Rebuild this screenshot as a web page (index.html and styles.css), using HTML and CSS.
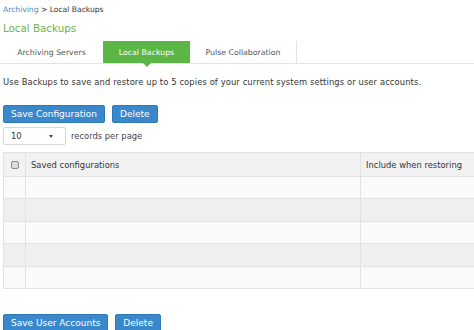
FILE: index.html
```html
<!DOCTYPE html>
<html>
<head>
<meta charset="utf-8">
<link rel="stylesheet" href="styles.css">
</head>
<body>
<div class="page">
  <div class="crumb"><a class="crumb-link">Archiving</a> &gt; Local Backups</div>
  <h1 class="title">Local Backups</h1>
  <div class="tabs">
    <div class="tab">Archiving Servers</div>
    <div class="tab active">Local Backups</div>
    <div class="tab last">Pulse Collaboration</div>
  </div>
  <p class="desc">Use Backups to save and restore up to 5 copies of your current system settings or user accounts.</p>
  <div class="btns">
    <button class="btn">Save Configuration</button>
    <button class="btn">Delete</button>
  </div>
  <div class="pager">
    <div class="select"><span>10</span><span class="caret"></span></div>
    <span class="pager-label">records per page</span>
  </div>
  <table class="grid">
    <thead>
      <tr>
        <th class="c-check"><span class="chk"></span></th>
        <th class="c-name">Saved configurations</th>
        <th class="c-inc">Include when restoring</th>
      </tr>
    </thead>
    <tbody>
      <tr><td></td><td></td><td></td></tr>
      <tr><td></td><td></td><td></td></tr>
      <tr><td></td><td></td><td></td></tr>
      <tr><td></td><td></td><td></td></tr>
      <tr><td></td><td></td><td></td></tr>
    </tbody>
  </table>
  <div class="btns bottom">
    <button class="btn">Save User Accounts</button>
    <button class="btn">Delete</button>
  </div>
</div>
</body>
</html>
```
FILE: styles.css
```css
html, body {
  margin: 0;
  padding: 0;
  background: #fff;
  overflow: hidden;
}
body {
  font-family: "DejaVu Sans", Verdana, sans-serif;
  font-size: 8.4px;
  color: #333;
}
.page {
  padding: 3px 0 0 3px;
}
.crumb {
  height: 11px;
  line-height: 11px;
  font-size: 7.6px;
  color: #333;
  margin-top: 1px;
}
.crumb-link {
  color: #4a86c5;
}
.title {
  margin: 6px 0 0 0;
  font-size: 10.3px;
  line-height: 14px;
  font-weight: normal;
  color: #6db24f;
}
.tabs {
  display: flex;
  margin: 6px 0 0 -3px;
  height: 22px;
  border-bottom: 1px solid #e3e3e3;
  font-size: 7.8px;
}
.tab {
  position: relative;
  display: flex;
  align-items: center;
  justify-content: center;
  color: #555;
  width: 103px;
}
.tab.active {
  width: 87px;
  background: #5cb646;
  color: #fff;
}
.tab.active::after {
  content: "";
  position: absolute;
  left: 50%;
  bottom: -4px;
  margin-left: -4px;
  border-left: 4px solid transparent;
  border-right: 4px solid transparent;
  border-top: 4px solid #5cb646;
}
.tab.last {
  width: 106px;
  border-right: 1px solid #e3e3e3;
}
.desc {
  margin: 13px 0 0 0;
  line-height: 10px;
  color: #333;
  letter-spacing: 0.1px;
}
.btns {
  display: flex;
  gap: 7px;
  margin-top: 18px;
}
.btn {
  font-family: "DejaVu Sans", Verdana, sans-serif;
  font-size: 9px;
  height: 18px;
  padding: 0 7px;
  background: #3a88cc;
  color: #fff;
  border: 1px solid #2f78b8;
  border-radius: 2px;
}
.pager {
  display: flex;
  align-items: center;
  gap: 5px;
  margin-top: 4px;
}
.select {
  box-sizing: border-box;
  width: 63px;
  height: 18px;
  border: 1px solid #d8d8d8;
  border-radius: 2px;
  display: flex;
  align-items: center;
  justify-content: space-between;
  padding: 0 12px 0 7px;
  color: #333;
}
.caret {
  width: 0;
  height: 0;
  border-left: 2.5px solid transparent;
  border-right: 2.5px solid transparent;
  border-top: 3px solid #444;
}
.pager-label {
  color: #444;
}
.grid {
  margin-top: 7px;
  border-collapse: collapse;
  width: 480px;
  table-layout: fixed;
}
.grid th, .grid td {
  border: 1px solid #e2e2e2;
  padding: 0;
}
.grid th {
  height: 23px;
  background: #f2f2f2;
  font-weight: normal;
  text-align: left;
  color: #333;
}
.grid td {
  height: 21.4px;
}
.grid tbody tr:nth-child(odd) td {
  background: #fafafa;
}
.grid tbody tr:nth-child(even) td {
  background: #efefef;
}
.c-check {
  width: 21px;
  text-align: center !important;
}
.c-name {
  width: 329px;
  padding-left: 5px !important;
}
.c-inc {
  padding-left: 5px !important;
}
.chk {
  display: inline-block;
  width: 6px;
  height: 6px;
  border: 1px solid #888;
  border-radius: 2px;
  background: #ddd;
  vertical-align: middle;
}
.btns.bottom {
  margin-top: 25px;
}
```
